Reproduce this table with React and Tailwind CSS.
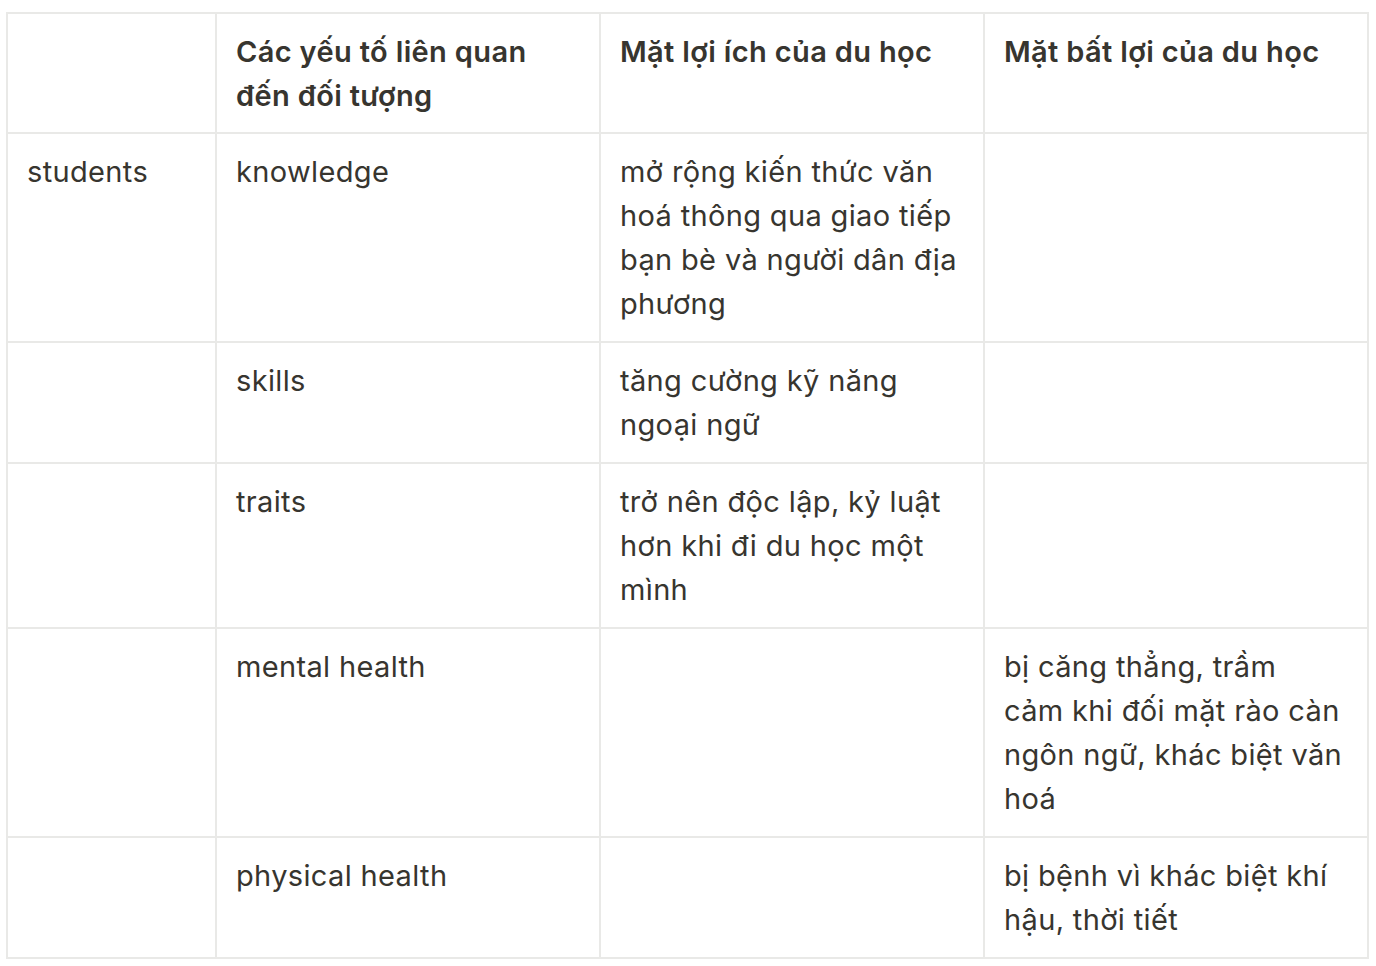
const rows = [
  ['students', 'knowledge', 'mở rộng kiến thức văn hoá thông qua giao tiếp bạn bè và người dân địa phương', ''],
  ['', 'skills', 'tăng cường kỹ năng ngoại ngữ', ''],
  ['', 'traits', 'trở nên độc lập, kỷ luật hơn khi đi du học một mình', ''],
  ['', 'mental health', '', 'bị căng thẳng, trầm cảm khi đối mặt rào càn ngôn ngữ, khác biệt văn hoá'],
  ['', 'physical health', '', 'bị bệnh vì khác biệt khí hậu, thời tiết'],
];

const headers = ['', 'Các yếu tố liên quan đến đối tượng', 'Mặt lợi ích của du học', 'Mặt bất lợi của du học'];

export default function App() {
  return (
    <div className="min-h-screen bg-white pt-[12px] pl-[6px] font-['Inter','Noto_Sans',sans-serif] text-[#37352f]">
      <table className="table-fixed border-collapse text-[29px] leading-[44px] tracking-[0.35px]">
        <colgroup>
          <col className="w-[209px]" />
          <col className="w-[384px]" />
          <col className="w-[384px]" />
          <col className="w-[384px]" />
        </colgroup>
        <thead>
          <tr>
            {headers.map((h, i) => (
              <th key={i} className="border-2 border-[#e9e9e7] px-[19px] pt-[16px] pb-[14px] text-left align-top font-semibold">
                {h}
              </th>
            ))}
          </tr>
        </thead>
        <tbody>
          {rows.map((r, i) => (
            <tr key={i}>
              {r.map((c, j) => (
                <td key={j} className="border-2 border-[#e9e9e7] pl-[19px] pr-[23px] pt-[16px] pb-[15px] align-top">
                  {c}
                </td>
              ))}
            </tr>
          ))}
        </tbody>
      </table>
    </div>
  );
}
